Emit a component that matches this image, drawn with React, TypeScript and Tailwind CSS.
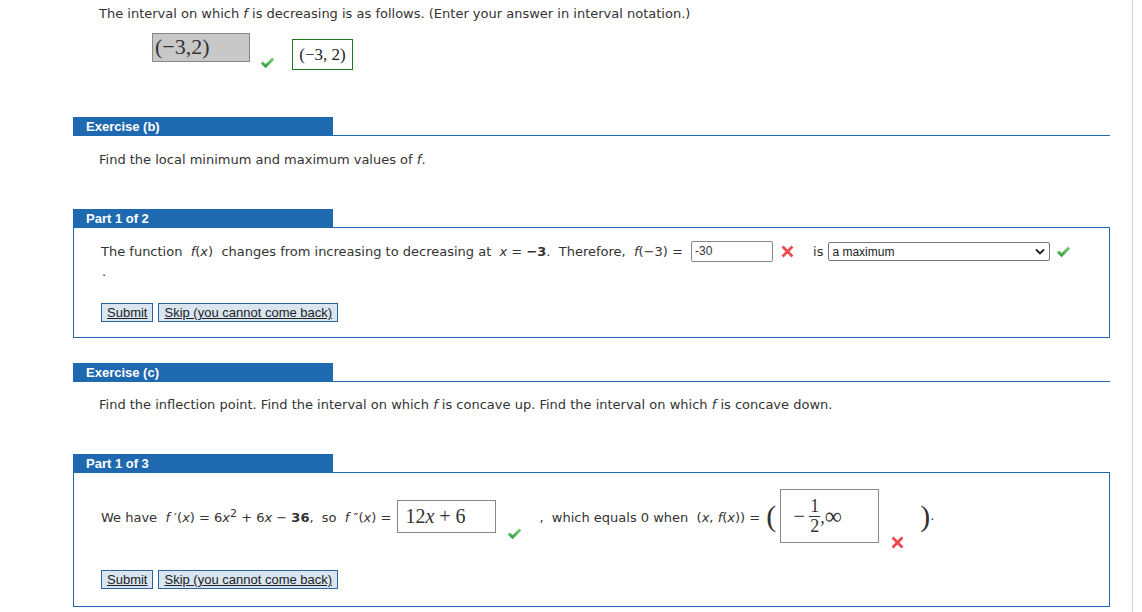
import React from "react";

const body = { fontFamily: '"DejaVu Sans", Verdana, sans-serif' };
const arial = { fontFamily: '"Liberation Sans", Arial, sans-serif' };
const serif = { fontFamily: '"Liberation Serif", "Times New Roman", serif' };

const Check = () => (
  <svg width="15" height="12" viewBox="0 0 15 12">
    <defs>
      <linearGradient id="chk" x1="0" y1="0" x2="0" y2="1">
        <stop offset="0" stopColor="#7dd37d" />
        <stop offset="1" stopColor="#2f9a3a" />
      </linearGradient>
    </defs>
    <path d="M0.8 6.6 L3 4.6 L5.6 7 L12.2 0.6 L14.3 2.6 L5.6 11.2 Z" fill="url(#chk)" />
  </svg>
);

const Cross = () => (
  <svg width="13" height="13" viewBox="0 0 13 13">
    <path
      d="M2.5 0.6 L6.5 4.4 L10.5 0.6 L12.4 2.5 L8.5 6.5 L12.4 10.5 L10.5 12.4 L6.5 8.5 L2.5 12.4 L0.6 10.5 L4.5 6.5 L0.6 2.5 Z"
      fill="#f0474f"
    />
  </svg>
);

const Tab = ({ label }: { label: string }) => (
  <div className="flex items-end">
    <div
      className="w-[260px] h-[19px] bg-[#1f69b1] text-white text-[13px] font-bold pl-[13px] leading-[19px]"
      style={arial}
    >
      {label}
    </div>
    <div className="flex-1 border-b border-[#1f69b1]" />
  </div>
);

const Buttons = () => (
  <div className="flex gap-[5px] text-[13px] text-[#222]" style={arial}>
    <div className="h-[19px] px-[5px] leading-[17px] bg-[#d9e5f1] border border-[#2d63a0] underline">Submit</div>
    <div className="h-[19px] px-[5px] leading-[17px] bg-[#d9e5f1] border border-[#2d63a0] underline">
      Skip (you cannot come back)
    </div>
  </div>
);

export default function App() {
  return (
    <div className="w-[1133px] min-h-[612px] border-r border-[#cfcfcf] bg-white text-[#333]" style={body}>
      <div className="pl-[73px] w-[1110px]">
        {/* decreasing interval */}
        <div className="pt-[6px] pl-[26px] text-[13px] leading-[16px]">
          The interval on which <i>f</i> is decreasing is as follows. (Enter your answer in interval notation.)
        </div>
        <div className="flex items-start mt-[11px] pl-[79px]">
          <div
            className="w-[98px] h-[29px] bg-[#c8c8c8] border border-[#888] pl-[2px] text-[22px] leading-[25px] text-[#333]"
            style={serif}
          >
            (−3,2)
          </div>
          <div className="ml-[10px] mt-[24px]">
            <Check />
          </div>
          <div
            className="ml-[17px] mt-[6px] w-[61px] h-[31px] border border-[#1d7a1d] text-[17px] leading-[29px] text-center text-[#222]"
            style={serif}
          >
            (−3, 2)
          </div>
        </div>

        {/* exercise b */}
        <div className="mt-[47px]">
          <Tab label="Exercise (b)" />
        </div>
        <div className="mt-[16px] pl-[26px] text-[13px] leading-[16px]">
          Find the local minimum and maximum values of <i>f</i>.
        </div>

        <div className="mt-[41px]">
          <Tab label="Part 1 of 2" />
        </div>
        <div className="border border-t-0 border-[#1f69b1] h-[110px] pl-[27px] pt-[13px]">
          <div className="flex items-center h-[21px] text-[13px]">
            <span className="whitespace-pre">
              The function  <i>f</i>(<i>x</i>)  changes from increasing to decreasing at  <i>x</i> = <b>−3</b>.  Therefore,  <i>f</i>(−3) ={" "}
            </span>
            <div className="ml-[4px] w-[82px] h-[21px] border border-[#888] rounded-[2px] pl-[3px] text-[12px] leading-[19px]" style={arial}>
              -30
            </div>
            <div className="ml-[8px]">
              <Cross />
            </div>
            <span className="ml-[19px]">is</span>
            <div
              className="ml-[5px] w-[222px] h-[19px] border border-[#777] rounded-[2px] flex items-center justify-between pl-[3px] pr-[4px] text-[12px] text-[#222]"
              style={arial}
            >
              a maximum
              <svg width="10" height="7" viewBox="0 0 10 7">
                <path d="M1 1.5 L5 5.5 L9 1.5" stroke="#222" strokeWidth="1.8" fill="none" />
              </svg>
            </div>
            <div className="ml-[6px]">
              <Check />
            </div>
          </div>
          <div className="mt-[2px] text-[13px] leading-[16px] pl-[1px]">.</div>
          <div className="mt-[23px]">
            <Buttons />
          </div>
        </div>

        {/* exercise c */}
        <div className="mt-[25px]">
          <Tab label="Exercise (c)" />
        </div>
        <div className="mt-[15px] pl-[26px] text-[13px] leading-[16px]">
          Find the inflection point. Find the interval on which <i>f</i> is concave up. Find the interval on which{" "}
          <i>f</i> is concave down.
        </div>

        <div className="mt-[41px]">
          <Tab label="Part 1 of 3" />
        </div>
        <div className="border border-t-0 border-[#1f69b1] h-[134px] pl-[27px] pt-[16px]">
          <div className="flex items-center h-[54px] text-[13px]">
            <span className="whitespace-pre mt-[4px]">
              We have  <i>f</i> ′(<i>x</i>) = 6<i>x</i>
              <sup className="text-[11px]">2</sup> + 6<i>x</i> − <b>36</b>,  so  <i>f</i> ″(<i>x</i>) ={" "}
            </span>
            <div
              className="ml-[2px] w-[99px] h-[33px] border border-[#888] pl-[7px] text-[20px] leading-[31px] text-[#333]"
              style={serif}
            >
              12<i>x</i> + 6
            </div>
            <div className="self-end mb-[3px] ml-[11px]">
              <Check />
            </div>
            <span className="whitespace-pre ml-[17px] mt-[3px]">
              ,  which equals 0 when  (<i>x</i>, <i>f</i>(<i>x</i>)) ={" "}
            </span>
            <span className="ml-[2px] text-[30px] leading-[30px] font-light" style={serif}>
              (
            </span>
            <div
              className="ml-[4px] w-[99px] h-[54px] border border-[#888] flex items-center pl-[12px] text-[#333]"
              style={serif}
            >
              <span className="text-[21px] mr-[4px] leading-[21px]">−</span>
              <span className="flex flex-col items-center text-[18px] leading-[17px]">
                <span>1</span>
                <span className="border-t border-[#333] w-[11px] h-0 my-[1px]" />
                <span>2</span>
              </span>
              <span className="text-[18px] self-end mb-[11px]">,</span>
              <span className="text-[24px] leading-[24px]">∞</span>
            </div>
            <div className="self-end -mb-[6px] ml-[12px]">
              <Cross />
            </div>
            <span className="ml-[16px] text-[30px] leading-[30px] font-light" style={serif}>
              )
            </span>
            <span className="text-[13px]">.</span>
          </div>
          <div className="mt-[27px]">
            <Buttons />
          </div>
        </div>
      </div>
    </div>
  );
}
